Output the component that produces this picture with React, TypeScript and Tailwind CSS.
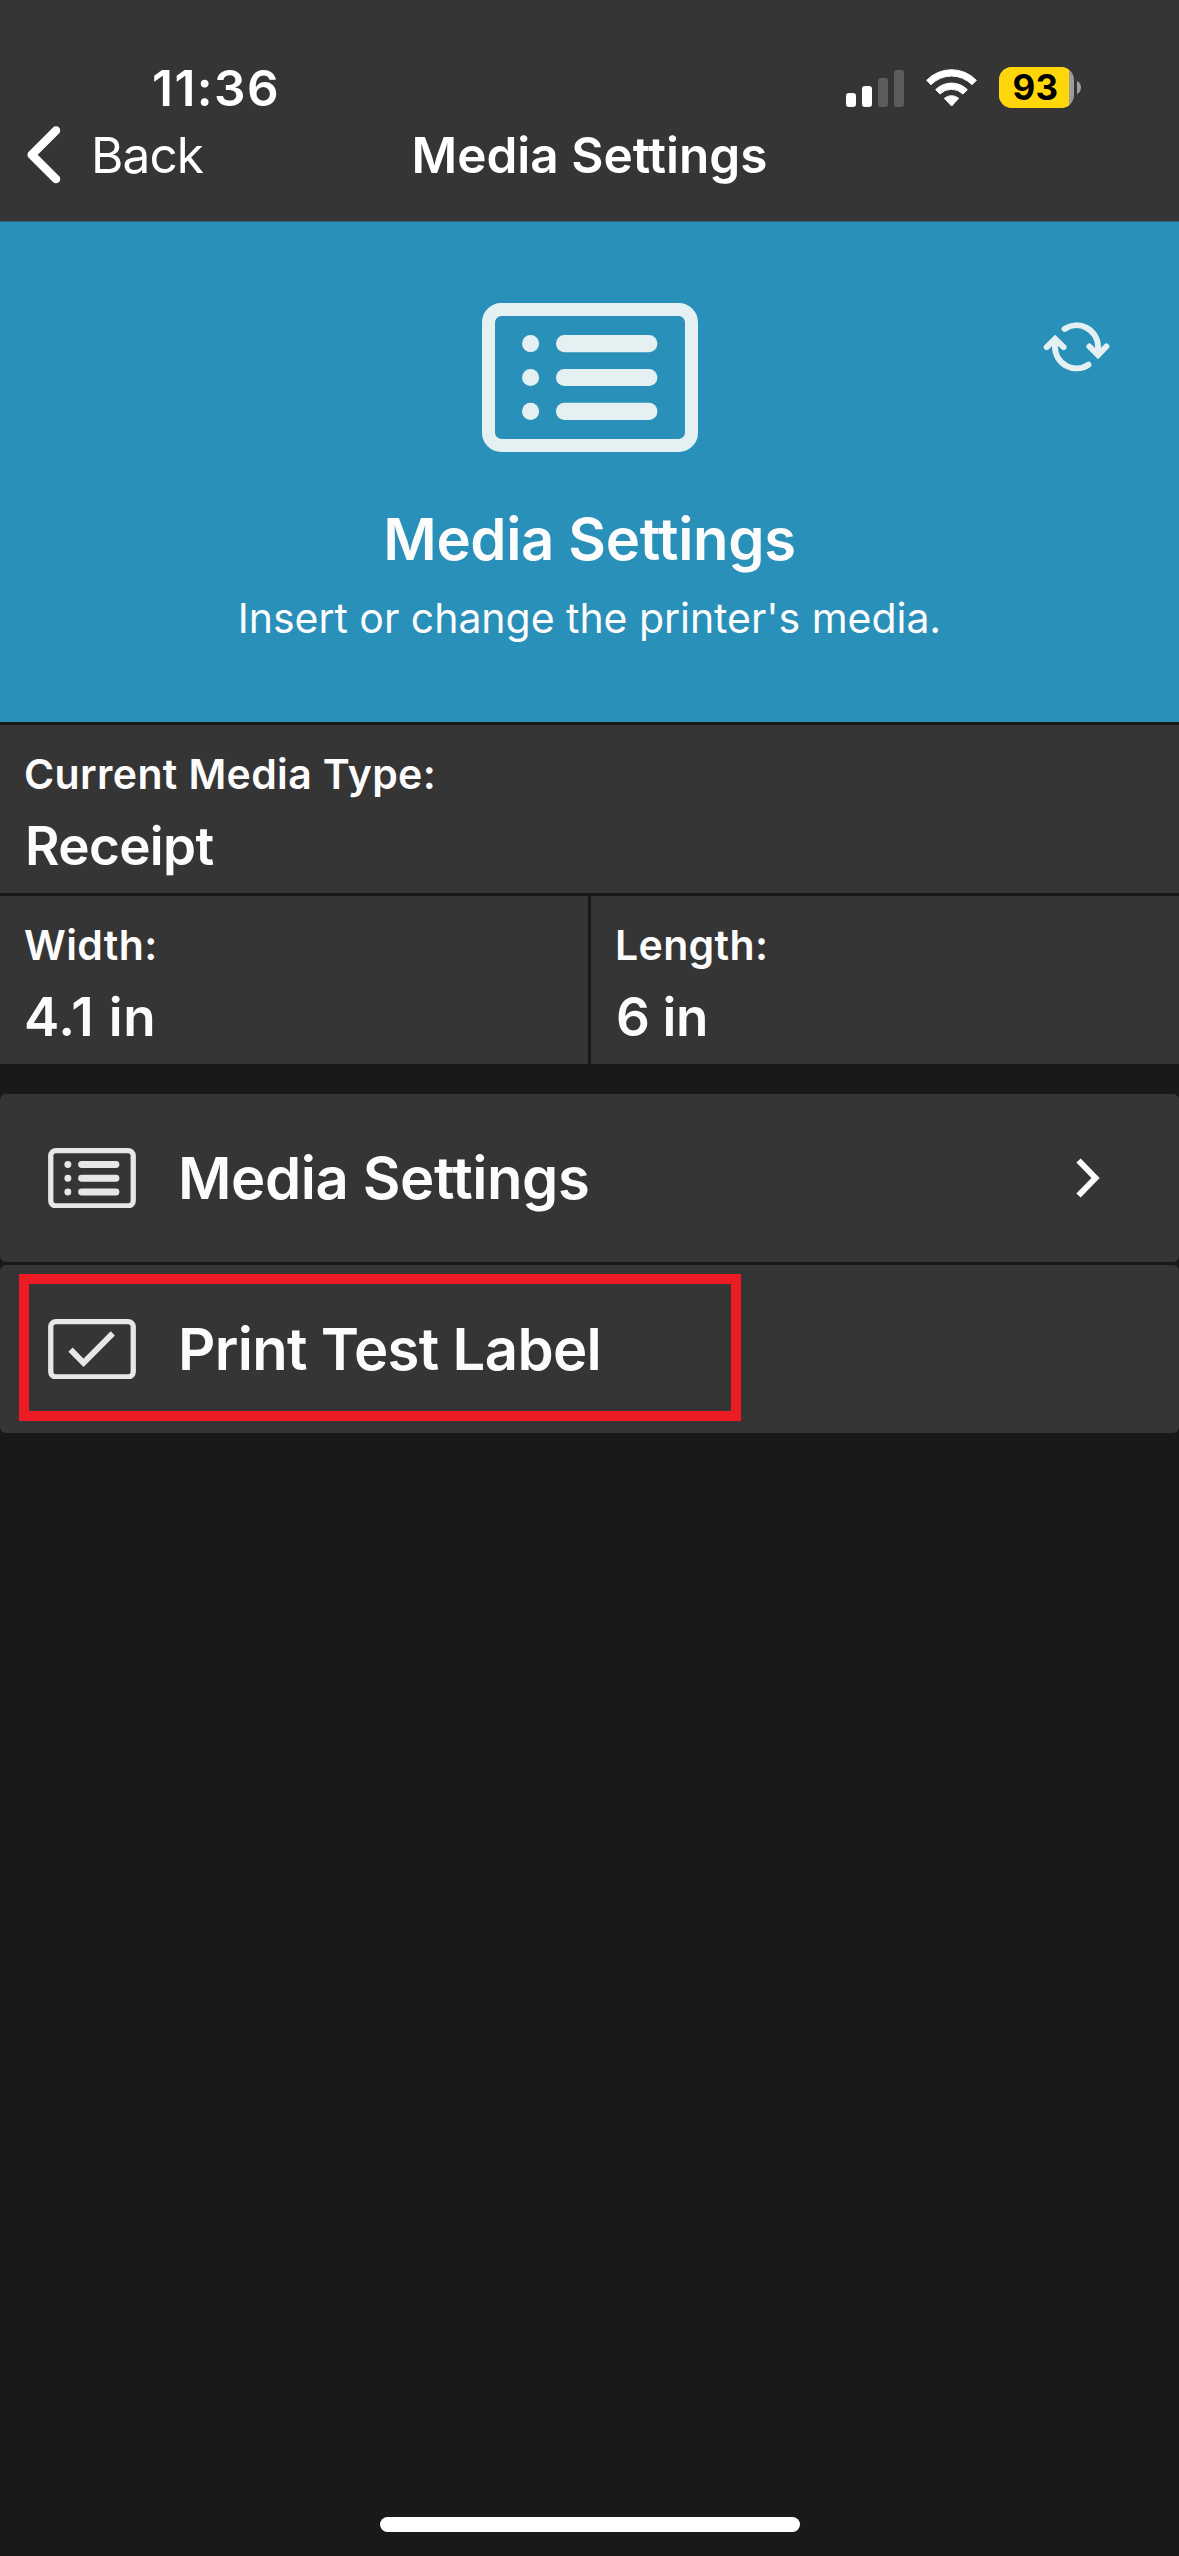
/**
 * @fileoverview Printer Media Settings Screen
 * @description Shows the current media of the printer and the related actions
 *
 * @features
 * - Status bar and navigation bar
 * - Hero with refresh action
 * - Current media info (type, width, length)
 * - Action list
 */

import type { ReactNode } from 'react';

/* ---------- Icons ---------- */

function WifiIcon() {
  return (
    <svg viewBox="378 85 153 114" className="h-[38px] w-[51px]" fill="#fff" stroke="#fff" strokeWidth="3" strokeLinejoin="round">
      <path d="M380 119A103 103 0 0 1 529 119L516 132A86 86 0 0 0 393 132Z" />
      <path d="M407 147A67 67 0 0 1 502 147L489 160A49 49 0 0 0 420 160Z" />
      <path d="M433 173A33 33 0 0 1 476 173L455 196Z" />
    </svg>
  );
}

function BatteryIcon({ level }: { level: number }) {
  return (
    <div className="mb-px flex items-center gap-[3px]">
      <div className="relative flex h-[41px] w-[75px] items-center justify-center overflow-hidden rounded-[13px] bg-[#9c9c9d]">
        <div className="absolute inset-y-0 left-0 bg-[#ffd60a]" style={{ width: `${level}%` }} />
        <span className="relative pr-0.5 text-[35px] leading-none font-bold tracking-[0.3px] text-black">{level}</span>
      </div>
      <svg viewBox="0 0 4 13" className="h-[13px] w-1" fill="#9c9c9d">
        <path d="M0 0C2.400 1.200 4 3.600 4 6.500S2.400 11.800 0 13Z" />
      </svg>
    </div>
  );
}

function BackIcon() {
  return (
    <svg viewBox="0 0 34 58" className="h-[58px] w-[34px]" fill="none" stroke="#fff" strokeWidth="8.500" strokeLinecap="round" strokeLinejoin="round">
      <path d="M29 4.500L4.700 28.700L29 53" />
    </svg>
  );
}

function RefreshIcon() {
  return (
    <svg viewBox="131 96 200 151" className="h-[50px] w-[67px]" fill="none" stroke="#e5f0f3" strokeWidth="18" strokeLinecap="round">
      <path d="M195 117A65 65 0 0 1 296 171V188" />
      <path d="M270 170L296 196L321 170" />
      <path d="M267 225A65 65 0 0 1 166 171V154" />
      <path d="M141 172L166.500 147L192 172" />
    </svg>
  );
}

function LabelIcon({ className, children }: { className: string; children: ReactNode }) {
  return (
    <svg viewBox="0 0 647 446" className={className} fill="currentColor">
      <rect x="19.500" y="19.500" width="608" height="407" rx="38" fill="none" stroke="currentColor" strokeWidth="39" />
      {children}
    </svg>
  );
}

function ListLabelIcon({ className }: { className: string }) {
  return (
    <LabelIcon className={className}>
      {[121.5, 223, 324.5].map((y) => (
        <g key={y}>
          <circle cx="145.500" cy={y} r="25.500" />
          <rect x="221.500" y={y - 25.5} width="304" height="51" rx="25.500" />
        </g>
      ))}
    </LabelIcon>
  );
}

function CheckLabelIcon({ className }: { className: string }) {
  return (
    <LabelIcon className={className}>
      <path d="M165 226L261 323L477 106" fill="none" stroke="currentColor" strokeWidth="44" />
    </LabelIcon>
  );
}

/* ---------- Sections ---------- */

function Header() {
  return (
    <header className="h-[222px] border-b border-[#2e6076] bg-[#353535] pt-[58px]">
      {/* Status bar */}
      <div className="flex h-[60px] items-center justify-between pr-[98px] pl-[152px]">
        <span className="text-[49.5px] leading-[60px] font-semibold tracking-[1.47px]">11:36</span>
        <div className="flex items-center gap-[22px]">
          <div className="flex h-[37px] items-end gap-1.5">
            <div className="h-3.5 w-2.5 rounded-[3px] bg-white" />
            <div className="h-[21px] w-2.5 rounded-[3px] bg-white" />
            <div className="h-[29px] w-2.5 rounded-[3px] bg-[#5d5d5d]" />
            <div className="h-[37px] w-2.5 rounded-[3px] bg-[#5d5d5d]" />
          </div>
          <WifiIcon />
          <BatteryIcon level={93} />
        </div>
      </div>

      {/* Navigation bar */}
      <div className="mt-[7px] grid h-[60px] grid-cols-3 items-center text-[49.5px] leading-[60px]">
        <button className="flex items-center gap-[30px] pl-[27px]">
          <BackIcon />
          <span className="tracking-[-0.9px]">Back</span>
        </button>
        <h1 className="text-center font-semibold whitespace-nowrap">Media Settings</h1>
      </div>
    </header>
  );
}

function Hero() {
  return (
    <section className="relative flex h-[500px] flex-col items-center bg-[#2990b9] pt-[80.5px] text-[#fcfcfc]">
      <ListLabelIcon className="h-[149px] w-[216px] text-[#e5f0f3]" />
      <h2 className="mt-[52.5px] text-[58px] leading-[70px] font-semibold tracking-[-0.32px]">Media Settings</h2>
      <p className="mt-[19px] text-[41px] leading-[50px] tracking-[-0.04px]">Insert or change the printer's media.</p>
      <button className="absolute top-[100px] right-[69px]">
        <RefreshIcon />
      </button>
    </section>
  );
}

function InfoCell({ label, value, valueClass }: { label: string; value: string; valueClass: string }) {
  return (
    <div className="h-[168px] flex-1 bg-[#353535] px-6 pt-6 font-semibold text-[#fcfcfc]">
      <div className="text-[41px] leading-[50px] tracking-[0.36px]">{label}</div>
      <div className={`mt-[15px] text-[53px] leading-[65px] ${valueClass}`}>{value}</div>
    </div>
  );
}

function ActionRow({ icon, children }: { icon: ReactNode; children: ReactNode }) {
  return (
    <div className="relative flex h-[168px] items-center rounded-[6px] bg-[#353535] pr-[79px] pl-12 text-[58px] font-semibold text-[#fcfcfc]">
      {icon}
      {children}
    </div>
  );
}

export default function App() {
  return (
    <div className="flex h-[2556px] w-[1179px] flex-col bg-[#191919] font-['Inter',sans-serif] text-white">
      <Header />
      <Hero />

      {/* Current media */}
      <section className="mt-[3px] flex flex-col gap-[3px]">
        <div className="flex">
          <InfoCell label="Current Media Type:" value="Receipt" valueClass="pl-px tracking-[-0.65px]" />
        </div>
        <div className="flex gap-[3px]">
          <InfoCell label="Width:" value="4.1 in" valueClass="tracking-[0.8px]" />
          <InfoCell label="Length:" value="6 in" valueClass="pl-px tracking-[-0.4px]" />
        </div>
      </section>

      {/* Actions */}
      <section className="mt-[30px] flex flex-col gap-[3px]">
        <ActionRow icon={<ListLabelIcon className="h-[60.5px] w-[88px] text-[#e7e7e7]" />}>
          <span className="ml-[42px] flex-1 tracking-[-0.4px]">Media Settings</span>
          <svg viewBox="0 0 24 40" className="h-10 w-6" fill="none" stroke="#fcfcfc" strokeWidth="6">
            <path d="M2.500 2.500L19.500 20L2.500 37.500" />
          </svg>
        </ActionRow>
        <ActionRow icon={<CheckLabelIcon className="h-[60.5px] w-[88px] text-[#e7e7e7]" />}>
          <span className="ml-[42px] tracking-[-0.65px]">Print Test Label</span>
          {/* Highlight */}
          <div className="absolute top-[9px] left-[19px] h-[147px] w-[722px] border-[10px] border-[#ed1c24]" />
        </ActionRow>
      </section>

      {/* Home indicator */}
      <div className="mt-auto mb-6 h-[15px] w-[420px] self-center rounded-full bg-white" />
    </div>
  );
}
